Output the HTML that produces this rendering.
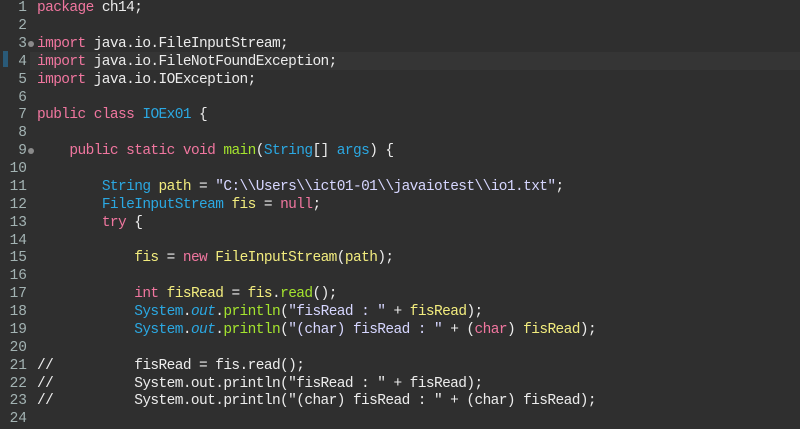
<!DOCTYPE html>
<html><head><meta charset="utf-8"><style>
body{margin:0;width:800px;height:428px;background:#2f2f2f;overflow:hidden;font-family:"Liberation Mono",monospace;font-size:14.5px;letter-spacing:-0.6px;}
.l{position:absolute;left:0;height:18px;line-height:20px;width:800px;white-space:pre;color:#ececec}
.n{position:absolute;left:0;width:27px;text-align:right;color:#a3b3b3;letter-spacing:0}
.c{position:absolute;left:37px}
.k{color:#f0769f}.t{color:#2ba8e2}.v{color:#f2ec7e}.s{color:#d6d6ff}.m{color:#a4e42e}.i{color:#2ba8e2;font-style:italic}
.hl{background:#353535}
.dot{position:absolute;left:28px;top:7px;width:6px;height:6px;border-radius:50%;background:#8a8a8a}
</style></head><body>
<div style="position:absolute;left:3px;top:51px;width:5px;height:16px;background:#2a5a78"></div>
<div class="l" style="top:-2px"><span class="n">1</span><span class="c"><span class="k">package</span> ch14;</span></div>
<div class="l" style="top:16px"><span class="n">2</span></div>
<div class="l" style="top:34px"><span class="n">3</span><span class="dot"></span><span class="c"><span class="k">import</span> java.io.FileInputStream;</span></div>
<div class="l hl" style="top:52px;left:30px;width:770px"><span class="n" style="left:-30px">4</span><span class="c" style="left:7px"><span class="k">import</span> java.io.FileNotFoundException;</span></div>
<div class="l" style="top:70px"><span class="n">5</span><span class="c"><span class="k">import</span> java.io.IOException;</span></div>
<div class="l" style="top:88px"><span class="n">6</span></div>
<div class="l" style="top:105px"><span class="n">7</span><span class="c"><span class="k">public</span> <span class="k">class</span> <span class="t">IOEx01</span> {</span></div>
<div class="l" style="top:123px"><span class="n">8</span></div>
<div class="l" style="top:141px"><span class="n">9</span><span class="dot" style="left:28px"></span><span class="c">    <span class="k">public</span> <span class="k">static</span> <span class="k">void</span> <span class="m">main</span>(<span class="t">String</span>[] <span class="t">args</span>) {</span></div>
<div class="l" style="top:159px"><span class="n">10</span></div>
<div class="l" style="top:177px"><span class="n">11</span><span class="c">        <span class="t">String</span> <span class="v">path</span> = <span class="s">"C:\\Users\\ict01-01\\javaiotest\\io1.txt"</span>;</span></div>
<div class="l" style="top:195px"><span class="n">12</span><span class="c">        <span class="t">FileInputStream</span> <span class="v">fis</span> = <span class="k">null</span>;</span></div>
<div class="l" style="top:213px"><span class="n">13</span><span class="c">        <span class="k">try</span> {</span></div>
<div class="l" style="top:231px"><span class="n">14</span></div>
<div class="l" style="top:248px"><span class="n">15</span><span class="c">            <span class="v">fis</span> = <span class="k">new</span> <span class="v">FileInputStream</span>(<span class="v">path</span>);</span></div>
<div class="l" style="top:266px"><span class="n">16</span></div>
<div class="l" style="top:284px"><span class="n">17</span><span class="c">            <span class="k">int</span> <span class="v">fisRead</span> = <span class="v">fis</span>.<span class="m">read</span>();</span></div>
<div class="l" style="top:302px"><span class="n">18</span><span class="c">            <span class="t">System</span>.<span class="i">out</span>.<span class="m">println</span>(<span class="s">"fisRead : "</span> + <span class="v">fisRead</span>);</span></div>
<div class="l" style="top:320px"><span class="n">19</span><span class="c">            <span class="t">System</span>.<span class="i">out</span>.<span class="m">println</span>(<span class="s">"(char) fisRead : "</span> + (<span class="k">char</span>) <span class="v">fisRead</span>);</span></div>
<div class="l" style="top:338px"><span class="n">20</span></div>
<div class="l" style="top:356px"><span class="n">21</span><span class="c">//          fisRead = fis.read();</span></div>
<div class="l" style="top:374px"><span class="n">22</span><span class="c">//          System.out.println("fisRead : " + fisRead);</span></div>
<div class="l" style="top:391px"><span class="n">23</span><span class="c">//          System.out.println("(char) fisRead : " + (char) fisRead);</span></div>
<div class="l" style="top:409px"><span class="n">24</span></div>
</body></html>
